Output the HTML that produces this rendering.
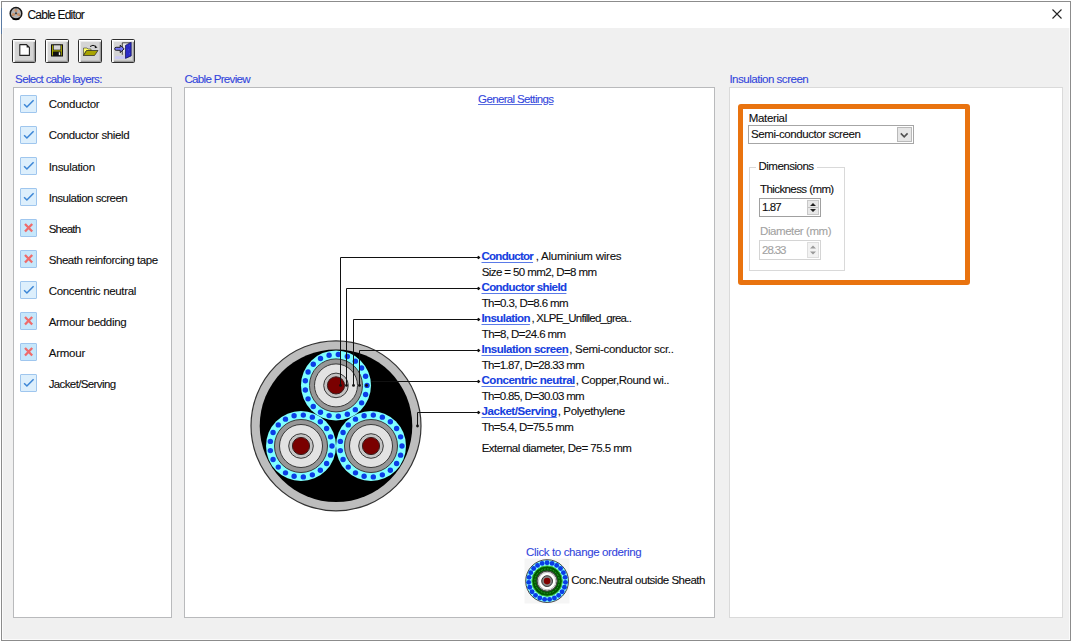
<!DOCTYPE html>
<html><head><meta charset="utf-8">
<style>
html,body{margin:0;padding:0;}
body{width:1072px;height:642px;position:relative;overflow:hidden;background:#fff;font-family:"Liberation Sans",sans-serif;}
.abs{position:absolute;}
.tx{position:absolute;white-space:pre;line-height:1;font-family:"Liberation Sans",sans-serif;-webkit-text-stroke:0.1px currentColor;}
.frame{position:absolute;left:1px;top:1px;width:1068px;height:638px;border:1px solid #8c8c8c;background:#f0f0f0;box-shadow:inset 1px 0 0 #fbfbfb, inset -1px -1px 0 #fbfbfb;}
.title{position:absolute;left:2px;top:2px;width:1068px;height:26px;background:#fff;}
.btn{position:absolute;top:39px;width:22px;height:22px;border:1px solid #2e2e2e;border-radius:1.5px;background:#d4d4d4;box-shadow:inset 1px 1px 0 #fff, inset 2px 2px 0 #ececec, inset -1px -1px 0 #9a9a9a, inset -2px -2px 0 #c2c2c2;}
.panel{position:absolute;top:87px;height:529px;background:#fff;border:1px solid #b9babc;}
.cb{position:absolute;left:20px;width:15px;height:16px;border:1px solid #9fc6ee;border-radius:1px;background:#ddeffc;}
.cb.x{background:#c6e7fb;}
</style></head><body>
<div class="frame"></div>
<div class="abs" style="left:1px;top:8px;width:1px;height:26px;background:#5b7ba3"></div>
<div class="title"></div>
<svg class="abs" style="left:6px;top:4px" width="20" height="20" viewBox="0 0 20 20">
 <circle cx="10" cy="9.4" r="5.8" fill="#b4b4b4" stroke="#161616" stroke-width="1.5"/>
 <path d="M10 9.4 V3.8 M10 9.4 L5.2 12.2 M10 9.4 L14.8 12.2" stroke="#555" stroke-width="0.9"/>
 <circle cx="10" cy="6.6" r="1.5" fill="#cf9468"/>
 <circle cx="7.4" cy="10.6" r="1.5" fill="#cf9468"/>
 <circle cx="12.6" cy="10.6" r="1.5" fill="#cf9468"/>
 <circle cx="10" cy="9.4" r="0.8" fill="#333"/>
 <path d="M6.5 14.6 Q10 16.2 13.5 14.6" stroke="#000" stroke-width="1.6" fill="none"/>
</svg>
<svg class="abs" style="left:1051px;top:8px" width="12" height="12"><path d="M1.5 1.5 L10.5 10.5 M10.5 1.5 L1.5 10.5" stroke="#222" stroke-width="1.1"/></svg>
<!-- toolbar -->
<div class="btn" style="left:12px"></div>
<div class="btn" style="left:45px"></div>
<div class="btn" style="left:78px"></div>
<div class="btn" style="left:111px"></div>
<svg class="abs" style="left:0;top:0" width="150" height="70">
 <path d="M19.8 44.6 H26.6 L29.4 47.4 V55.4 H19.8 Z" fill="#fff" stroke="#222" stroke-width="1.1" stroke-linejoin="round"/>
 <path d="M26.6 44.6 V47.4 H29.4 Z" fill="#222"/>
 <rect x="51" y="44.3" width="12" height="12.2" fill="#111"/>
 <rect x="52" y="45.3" width="10" height="10.2" fill="#a8a800"/>
 <rect x="53.3" y="45" width="7.5" height="5" fill="#d8d8d8" stroke="#111" stroke-width="0.6"/>
 <rect x="53" y="51.5" width="8.2" height="4.6" fill="#111"/>
 <rect x="58.8" y="52.3" width="1.4" height="2.8" fill="#eee"/>
 <path d="M83.5 48 H87 L88 49 H91 V51 H86 L83.5 55.5 Z" fill="#ffff66" stroke="#333" stroke-width="0.6"/>
 <path d="M83.5 55.5 L86.5 50.5 H98 L94.5 55.5 Z" fill="#a8a400" stroke="#222" stroke-width="0.7"/>
 <path d="M90 46.5 Q93 44 96 46.5" fill="none" stroke="#111" stroke-width="1"/>
 <path d="M95 45.5 L97.5 47.5 L94.8 48.2 Z" fill="#111"/>
 <rect x="115" y="56.3" width="10.5" height="2.6" fill="#c8c8f6"/>
 <path d="M122.3 54.8 V42.8 H130" fill="#e6e6e6" stroke="#222" stroke-width="0.8"/>
 <path d="M125.5 45.4 L131.2 42.2 V55.9 L125.5 58.4 Z" fill="#2a2ac6" stroke="#0c0c50" stroke-width="0.7"/>
 <circle cx="129.4" cy="45.8" r="0.35" fill="#9090e0"/><circle cx="128.6" cy="49.8" r="0.35" fill="#9090e0"/><circle cx="129.4" cy="53.8" r="0.35" fill="#9090e0"/>
 <path d="M114.7 48.8 Q114.7 47.3 116.2 47.3 H120.2 V45.2 L124.2 48.8 L120.2 52.6 V50.3 H116.2 Q114.7 50.3 114.7 48.8 Z" fill="#7a7af8" stroke="#111" stroke-width="0.9"/>
</svg>
<!-- panels -->
<div class="panel" style="left:13px;width:157px"></div>
<div class="panel" style="left:184px;width:529px"></div>
<div class="panel" style="left:729px;width:332px;border-color:#dadada"></div>
<div class='cb' style='top:95px'><svg width='17' height='18' style='position:absolute;left:-1px;top:-1px'><path d='M4.1 9.3 L6.9 12 L13.6 5.3' fill='none' stroke='#3d86d6' stroke-width='1.55'/></svg></div>
<div class='cb' style='top:126px'><svg width='17' height='18' style='position:absolute;left:-1px;top:-1px'><path d='M4.1 9.3 L6.9 12 L13.6 5.3' fill='none' stroke='#3d86d6' stroke-width='1.55'/></svg></div>
<div class='cb' style='top:157px'><svg width='17' height='18' style='position:absolute;left:-1px;top:-1px'><path d='M4.1 9.3 L6.9 12 L13.6 5.3' fill='none' stroke='#3d86d6' stroke-width='1.55'/></svg></div>
<div class='cb' style='top:188px'><svg width='17' height='18' style='position:absolute;left:-1px;top:-1px'><path d='M4.1 9.3 L6.9 12 L13.6 5.3' fill='none' stroke='#3d86d6' stroke-width='1.55'/></svg></div>
<div class='cb x' style='top:219px'><svg width='17' height='18' style='position:absolute;left:-1px;top:-1px'><path d='M5 5 L12.2 12.5 M12.2 5 L5 12.5' fill='none' stroke='#ef6b6b' stroke-width='2.3'/></svg></div>
<div class='cb x' style='top:250px'><svg width='17' height='18' style='position:absolute;left:-1px;top:-1px'><path d='M5 5 L12.2 12.5 M12.2 5 L5 12.5' fill='none' stroke='#ef6b6b' stroke-width='2.3'/></svg></div>
<div class='cb' style='top:281px'><svg width='17' height='18' style='position:absolute;left:-1px;top:-1px'><path d='M4.1 9.3 L6.9 12 L13.6 5.3' fill='none' stroke='#3d86d6' stroke-width='1.55'/></svg></div>
<div class='cb x' style='top:312px'><svg width='17' height='18' style='position:absolute;left:-1px;top:-1px'><path d='M5 5 L12.2 12.5 M12.2 5 L5 12.5' fill='none' stroke='#ef6b6b' stroke-width='2.3'/></svg></div>
<div class='cb x' style='top:343px'><svg width='17' height='18' style='position:absolute;left:-1px;top:-1px'><path d='M5 5 L12.2 12.5 M12.2 5 L5 12.5' fill='none' stroke='#ef6b6b' stroke-width='2.3'/></svg></div>
<div class='cb' style='top:374px'><svg width='17' height='18' style='position:absolute;left:-1px;top:-1px'><path d='M4.1 9.3 L6.9 12 L13.6 5.3' fill='none' stroke='#3d86d6' stroke-width='1.55'/></svg></div>
<!-- preview drawings -->
<svg class="abs" style="left:0;top:0" width="1072" height="642">
<circle cx='336' cy='425.8' r='85' fill='#bdbdbd' stroke='#333' stroke-width='1.2'/><circle cx='336' cy='425.8' r='76.3' fill='#000'/><circle cx='336' cy='385.40000000000003' r='35' fill='#80ffff'/><circle cx='367.00' cy='385.40' r='2.7' fill='#0a3de6'/><circle cx='365.62' cy='394.54' r='2.7' fill='#0a3de6'/><circle cx='361.61' cy='402.86' r='2.7' fill='#0a3de6'/><circle cx='355.33' cy='409.64' r='2.7' fill='#0a3de6'/><circle cx='347.33' cy='414.26' r='2.7' fill='#0a3de6'/><circle cx='338.32' cy='416.31' r='2.7' fill='#0a3de6'/><circle cx='329.10' cy='415.62' r='2.7' fill='#0a3de6'/><circle cx='320.50' cy='412.25' r='2.7' fill='#0a3de6'/><circle cx='313.28' cy='406.49' r='2.7' fill='#0a3de6'/><circle cx='308.07' cy='398.85' r='2.7' fill='#0a3de6'/><circle cx='305.35' cy='390.02' r='2.7' fill='#0a3de6'/><circle cx='305.35' cy='380.78' r='2.7' fill='#0a3de6'/><circle cx='308.07' cy='371.95' r='2.7' fill='#0a3de6'/><circle cx='313.28' cy='364.31' r='2.7' fill='#0a3de6'/><circle cx='320.50' cy='358.55' r='2.7' fill='#0a3de6'/><circle cx='329.10' cy='355.18' r='2.7' fill='#0a3de6'/><circle cx='338.32' cy='354.49' r='2.7' fill='#0a3de6'/><circle cx='347.33' cy='356.54' r='2.7' fill='#0a3de6'/><circle cx='355.33' cy='361.16' r='2.7' fill='#0a3de6'/><circle cx='361.61' cy='367.94' r='2.7' fill='#0a3de6'/><circle cx='365.62' cy='376.26' r='2.7' fill='#0a3de6'/><circle cx='336' cy='385.40000000000003' r='26.5' fill='#979797' stroke='#3a3a3a' stroke-width='1'/><circle cx='336' cy='385.40000000000003' r='21.5' fill='#e2e2e2' stroke='#3a3a3a' stroke-width='1'/><circle cx='336' cy='385.40000000000003' r='12.3' fill='#c4c4c4' stroke='#3a3a3a' stroke-width='1'/><circle cx='336' cy='385.40000000000003' r='8.6' fill='#7a0000' stroke='#3a2020' stroke-width='1'/><circle cx='301' cy='446.0' r='35' fill='#80ffff'/><circle cx='332.00' cy='446.00' r='2.7' fill='#0a3de6'/><circle cx='330.62' cy='455.14' r='2.7' fill='#0a3de6'/><circle cx='326.61' cy='463.46' r='2.7' fill='#0a3de6'/><circle cx='320.33' cy='470.24' r='2.7' fill='#0a3de6'/><circle cx='312.33' cy='474.86' r='2.7' fill='#0a3de6'/><circle cx='303.32' cy='476.91' r='2.7' fill='#0a3de6'/><circle cx='294.10' cy='476.22' r='2.7' fill='#0a3de6'/><circle cx='285.50' cy='472.85' r='2.7' fill='#0a3de6'/><circle cx='278.28' cy='467.09' r='2.7' fill='#0a3de6'/><circle cx='273.07' cy='459.45' r='2.7' fill='#0a3de6'/><circle cx='270.35' cy='450.62' r='2.7' fill='#0a3de6'/><circle cx='270.35' cy='441.38' r='2.7' fill='#0a3de6'/><circle cx='273.07' cy='432.55' r='2.7' fill='#0a3de6'/><circle cx='278.28' cy='424.91' r='2.7' fill='#0a3de6'/><circle cx='285.50' cy='419.15' r='2.7' fill='#0a3de6'/><circle cx='294.10' cy='415.78' r='2.7' fill='#0a3de6'/><circle cx='303.32' cy='415.09' r='2.7' fill='#0a3de6'/><circle cx='312.33' cy='417.14' r='2.7' fill='#0a3de6'/><circle cx='320.33' cy='421.76' r='2.7' fill='#0a3de6'/><circle cx='326.61' cy='428.54' r='2.7' fill='#0a3de6'/><circle cx='330.62' cy='436.86' r='2.7' fill='#0a3de6'/><circle cx='301' cy='446.0' r='26.5' fill='#979797' stroke='#3a3a3a' stroke-width='1'/><circle cx='301' cy='446.0' r='21.5' fill='#e2e2e2' stroke='#3a3a3a' stroke-width='1'/><circle cx='301' cy='446.0' r='12.3' fill='#c4c4c4' stroke='#3a3a3a' stroke-width='1'/><circle cx='301' cy='446.0' r='8.6' fill='#7a0000' stroke='#3a2020' stroke-width='1'/><circle cx='371' cy='446.0' r='35' fill='#80ffff'/><circle cx='402.00' cy='446.00' r='2.7' fill='#0a3de6'/><circle cx='400.62' cy='455.14' r='2.7' fill='#0a3de6'/><circle cx='396.61' cy='463.46' r='2.7' fill='#0a3de6'/><circle cx='390.33' cy='470.24' r='2.7' fill='#0a3de6'/><circle cx='382.33' cy='474.86' r='2.7' fill='#0a3de6'/><circle cx='373.32' cy='476.91' r='2.7' fill='#0a3de6'/><circle cx='364.10' cy='476.22' r='2.7' fill='#0a3de6'/><circle cx='355.50' cy='472.85' r='2.7' fill='#0a3de6'/><circle cx='348.28' cy='467.09' r='2.7' fill='#0a3de6'/><circle cx='343.07' cy='459.45' r='2.7' fill='#0a3de6'/><circle cx='340.35' cy='450.62' r='2.7' fill='#0a3de6'/><circle cx='340.35' cy='441.38' r='2.7' fill='#0a3de6'/><circle cx='343.07' cy='432.55' r='2.7' fill='#0a3de6'/><circle cx='348.28' cy='424.91' r='2.7' fill='#0a3de6'/><circle cx='355.50' cy='419.15' r='2.7' fill='#0a3de6'/><circle cx='364.10' cy='415.78' r='2.7' fill='#0a3de6'/><circle cx='373.32' cy='415.09' r='2.7' fill='#0a3de6'/><circle cx='382.33' cy='417.14' r='2.7' fill='#0a3de6'/><circle cx='390.33' cy='421.76' r='2.7' fill='#0a3de6'/><circle cx='396.61' cy='428.54' r='2.7' fill='#0a3de6'/><circle cx='400.62' cy='436.86' r='2.7' fill='#0a3de6'/><circle cx='371' cy='446.0' r='26.5' fill='#979797' stroke='#3a3a3a' stroke-width='1'/><circle cx='371' cy='446.0' r='21.5' fill='#e2e2e2' stroke='#3a3a3a' stroke-width='1'/><circle cx='371' cy='446.0' r='12.3' fill='#c4c4c4' stroke='#3a3a3a' stroke-width='1'/><circle cx='371' cy='446.0' r='8.6' fill='#7a0000' stroke='#3a2020' stroke-width='1'/><path d='M340.5 385.4 V257.5 H478' fill='none' stroke='#111' stroke-width='1'/><path d='M476.5 257.5 L478.5 255.7 L480.5 257.5 L478.5 259.3 Z' fill='#111'/><circle cx='340.5' cy='385.4' r='1.4' fill='#111'/><path d='M346.5 385.4 V288.5 H478' fill='none' stroke='#111' stroke-width='1'/><path d='M476.5 288.5 L478.5 286.7 L480.5 288.5 L478.5 290.3 Z' fill='#111'/><circle cx='346.5' cy='385.4' r='1.4' fill='#111'/><path d='M353.5 385.4 V319.5 H478' fill='none' stroke='#111' stroke-width='1'/><path d='M476.5 319.5 L478.5 317.7 L480.5 319.5 L478.5 321.3 Z' fill='#111'/><circle cx='353.5' cy='385.4' r='1.4' fill='#111'/><path d='M359.5 385.4 V350.5 H478' fill='none' stroke='#111' stroke-width='1'/><path d='M476.5 350.5 L478.5 348.7 L480.5 350.5 L478.5 352.3 Z' fill='#111'/><circle cx='359.5' cy='385.4' r='1.4' fill='#111'/><path d='M371 381.5 H478' fill='none' stroke='#111' stroke-width='1'/><path d='M476.5 381.5 L478.5 379.7 L480.5 381.5 L478.5 383.3 Z' fill='#111'/><circle cx='366.5' cy='385.4' r='1.4' fill='#111'/><path d='M417.5 426 V412.5 H478' fill='none' stroke='#111' stroke-width='1'/><path d='M476.5 412.5 L478.5 410.7 L480.5 412.5 L478.5 414.3 Z' fill='#111'/><circle cx='417.5' cy='426' r='1.4' fill='#111'/>
<rect x='524.5' y='558.5' width='45' height='45' fill='#f5f5f5'/><circle cx='547.1' cy='581.1' r='21.4' fill='#88ffff' stroke='#4a4a4a' stroke-width='1'/><circle cx='547.10' cy='562.70' r='2.45' fill='#0a3de6'/><circle cx='552.06' cy='563.38' r='2.45' fill='#0a3de6'/><circle cx='556.66' cy='565.38' r='2.45' fill='#0a3de6'/><circle cx='560.55' cy='568.54' r='2.45' fill='#0a3de6'/><circle cx='563.44' cy='572.63' r='2.45' fill='#0a3de6'/><circle cx='565.12' cy='577.36' r='2.45' fill='#0a3de6'/><circle cx='565.46' cy='582.36' r='2.45' fill='#0a3de6'/><circle cx='564.44' cy='587.26' r='2.45' fill='#0a3de6'/><circle cx='562.13' cy='591.71' r='2.45' fill='#0a3de6'/><circle cx='558.71' cy='595.37' r='2.45' fill='#0a3de6'/><circle cx='554.43' cy='597.98' r='2.45' fill='#0a3de6'/><circle cx='549.61' cy='599.33' r='2.45' fill='#0a3de6'/><circle cx='544.59' cy='599.33' r='2.45' fill='#0a3de6'/><circle cx='539.77' cy='597.98' r='2.45' fill='#0a3de6'/><circle cx='535.49' cy='595.37' r='2.45' fill='#0a3de6'/><circle cx='532.07' cy='591.71' r='2.45' fill='#0a3de6'/><circle cx='529.76' cy='587.26' r='2.45' fill='#0a3de6'/><circle cx='528.74' cy='582.36' r='2.45' fill='#0a3de6'/><circle cx='529.08' cy='577.36' r='2.45' fill='#0a3de6'/><circle cx='530.76' cy='572.63' r='2.45' fill='#0a3de6'/><circle cx='533.65' cy='568.54' r='2.45' fill='#0a3de6'/><circle cx='537.54' cy='565.38' r='2.45' fill='#0a3de6'/><circle cx='542.14' cy='563.38' r='2.45' fill='#0a3de6'/><circle cx='547.1' cy='581.1' r='15.2' fill='#005a00' stroke='#3cc03c' stroke-width='1'/><circle cx='547.1' cy='581.1' r='12.2' fill='none' stroke='#3aa83a' stroke-width='0.8' stroke-dasharray='1.6 1.4'/><circle cx='547.1' cy='581.1' r='10' fill='#ffffff' stroke='#4a4a4a' stroke-width='1.2'/><circle cx='547.1' cy='581.1' r='8.7' fill='none' stroke='#bdbdbd' stroke-width='1'/><circle cx='547.1' cy='581.1' r='5.4' fill='#888' stroke='#333' stroke-width='1'/><circle cx='547.1' cy='581.1' r='3.3' fill='#800000'/>
</svg>
<!-- right panel -->
<div class="abs" style="left:738px;top:104px;width:222px;height:171px;border:5px solid #e9730f;border-radius:3px"></div>
<div class="abs" style="left:748px;top:125px;width:164px;height:17px;border:1px solid #a6a6a6;background:#fff"></div>
<div class="abs" style="left:897px;top:127px;width:13px;height:13px;border:1px solid #b9b9b9;background:#e6e6e6"></div>
<svg class="abs" style="left:897px;top:127px" width="15" height="15"><path d="M3.8 6.4 L7.2 9.8 L10.6 6.4" fill="none" stroke="#505050" stroke-width="1.6"/></svg>
<div class="abs" style="left:749px;top:167px;width:94px;height:102px;border:1px solid #d9d9d9"></div>
<div class="abs" style="left:759px;top:198px;width:60px;height:17px;border:1px solid #a0a0a0;background:#fff"></div>
<div class="abs" style="left:807px;top:200px;width:10px;height:13px;border:1px solid #c8c8c8;background:#e8e8e8"></div>
<svg class="abs" style="left:807px;top:200px" width="12" height="15"><path d="M3 6 L6 3 L9 6 Z M3 9 L6 12 L9 9 Z" fill="#222"/><path d="M1 7.5 H11" stroke="#c0c0c0" stroke-width="1"/></svg>
<div class="abs" style="left:759px;top:240px;width:60px;height:18px;border:1px solid #d4d4d4;background:#fff"></div>
<div class="abs" style="left:807px;top:242px;width:10px;height:14px;border:1px solid #dedede;background:#f2f2f2"></div>
<svg class="abs" style="left:807px;top:242px" width="12" height="16"><path d="M3 6.5 L6 3.5 L9 6.5 Z M3 9.5 L6 12.5 L9 9.5 Z" fill="#9a9a9a"/></svg>
<div class='tx' style='left:27.5px;top:9px;font-size:12.0px;font-weight:400;color:#0e0e0e;letter-spacing:-0.795px;'>Cable Editor</div>
<div class='tx' style='left:15.1px;top:73px;font-size:11.6px;font-weight:400;color:#3346dc;letter-spacing:-0.696px;'>Select cable layers:</div>
<div class='tx' style='left:184.4px;top:73px;font-size:11.6px;font-weight:400;color:#3346dc;letter-spacing:-0.704px;'>Cable Preview</div>
<div class='tx' style='left:729.4px;top:73px;font-size:11.6px;font-weight:400;color:#3346dc;letter-spacing:-0.516px;'>Insulation screen</div>
<div class='tx' style='left:48.7px;top:99px;font-size:11.5px;font-weight:400;color:#0e0e0e;letter-spacing:-0.258px;'>Conductor</div>
<div class='tx' style='left:48.7px;top:130px;font-size:11.5px;font-weight:400;color:#0e0e0e;letter-spacing:-0.354px;'>Conductor shield</div>
<div class='tx' style='left:48.7px;top:162px;font-size:11.5px;font-weight:400;color:#0e0e0e;letter-spacing:-0.315px;'>Insulation</div>
<div class='tx' style='left:48.7px;top:193px;font-size:11.5px;font-weight:400;color:#0e0e0e;letter-spacing:-0.497px;'>Insulation screen</div>
<div class='tx' style='left:48.7px;top:224px;font-size:11.5px;font-weight:400;color:#0e0e0e;letter-spacing:-0.811px;'>Sheath</div>
<div class='tx' style='left:48.7px;top:255px;font-size:11.5px;font-weight:400;color:#0e0e0e;letter-spacing:-0.433px;'>Sheath reinforcing tape</div>
<div class='tx' style='left:48.7px;top:286px;font-size:11.5px;font-weight:400;color:#0e0e0e;letter-spacing:-0.337px;'>Concentric neutral</div>
<div class='tx' style='left:48.7px;top:317px;font-size:11.5px;font-weight:400;color:#0e0e0e;letter-spacing:-0.294px;'>Armour bedding</div>
<div class='tx' style='left:48.7px;top:348px;font-size:11.5px;font-weight:400;color:#0e0e0e;letter-spacing:-0.221px;'>Armour</div>
<div class='tx' style='left:48.7px;top:379px;font-size:11.5px;font-weight:400;color:#0e0e0e;letter-spacing:-0.618px;'>Jacket/Serving</div>
<div class='tx' style='left:478.1px;top:94px;font-size:11.5px;font-weight:400;color:#3346dc;letter-spacing:-0.645px;text-decoration:underline;text-decoration-color:#5a70e0;text-underline-offset:1px;'>General Settings</div>
<div class='tx' style='left:481.5px;top:251px;font-size:11.5px;font-weight:700;color:#1540e0;letter-spacing:-0.730px;text-decoration:underline;text-decoration-color:#5a7ae8;text-underline-offset:1.5px;'>Conductor</div>
<div class='tx' style='left:535.8px;top:251px;font-size:11.5px;font-weight:400;color:#0e0e0e;letter-spacing:-0.229px;'>, Aluminium wires</div>
<div class='tx' style='left:481.7px;top:267px;font-size:11.5px;font-weight:400;color:#0e0e0e;letter-spacing:-0.594px;'>Size = 50 mm2, D=8 mm</div>
<div class='tx' style='left:481.5px;top:282px;font-size:11.5px;font-weight:700;color:#1540e0;letter-spacing:-0.604px;text-decoration:underline;text-decoration-color:#5a7ae8;text-underline-offset:1.5px;'>Conductor shield</div>
<div class='tx' style='left:481.7px;top:298px;font-size:11.5px;font-weight:400;color:#0e0e0e;letter-spacing:-0.592px;'>Th=0.3, D=8.6 mm</div>
<div class='tx' style='left:481.5px;top:313px;font-size:11.5px;font-weight:700;color:#1540e0;letter-spacing:-0.590px;text-decoration:underline;text-decoration-color:#5a7ae8;text-underline-offset:1.5px;'>Insulation</div>
<div class='tx' style='left:531.4px;top:313px;font-size:11.5px;font-weight:400;color:#0e0e0e;letter-spacing:-0.755px;'>, XLPE_Unfilled_grea..</div>
<div class='tx' style='left:481.7px;top:329px;font-size:11.5px;font-weight:400;color:#0e0e0e;letter-spacing:-0.585px;'>Th=8, D=24.6 mm</div>
<div class='tx' style='left:481.5px;top:344px;font-size:11.5px;font-weight:700;color:#1540e0;letter-spacing:-0.462px;text-decoration:underline;text-decoration-color:#5a7ae8;text-underline-offset:1.5px;'>Insulation screen</div>
<div class='tx' style='left:569.3px;top:344px;font-size:11.5px;font-weight:400;color:#0e0e0e;letter-spacing:-0.315px;'>, Semi-conductor scr..</div>
<div class='tx' style='left:481.7px;top:360px;font-size:11.5px;font-weight:400;color:#0e0e0e;letter-spacing:-0.670px;'>Th=1.87, D=28.33 mm</div>
<div class='tx' style='left:481.5px;top:375px;font-size:11.5px;font-weight:700;color:#1540e0;letter-spacing:-0.459px;text-decoration:underline;text-decoration-color:#5a7ae8;text-underline-offset:1.5px;'>Concentric neutral</div>
<div class='tx' style='left:575.7px;top:375px;font-size:11.5px;font-weight:400;color:#0e0e0e;letter-spacing:-0.406px;'>, Copper,Round wi..</div>
<div class='tx' style='left:481.7px;top:391px;font-size:11.5px;font-weight:400;color:#0e0e0e;letter-spacing:-0.670px;'>Th=0.85, D=30.03 mm</div>
<div class='tx' style='left:481.5px;top:406px;font-size:11.5px;font-weight:700;color:#1540e0;letter-spacing:-0.422px;text-decoration:underline;text-decoration-color:#5a7ae8;text-underline-offset:1.5px;'>Jacket/Serving</div>
<div class='tx' style='left:557.7px;top:406px;font-size:11.5px;font-weight:400;color:#0e0e0e;letter-spacing:-0.373px;'>, Polyethylene</div>
<div class='tx' style='left:481.7px;top:422px;font-size:11.5px;font-weight:400;color:#0e0e0e;letter-spacing:-0.636px;'>Th=5.4, D=75.5 mm</div>
<div class='tx' style='left:481.7px;top:443px;font-size:11.5px;font-weight:400;color:#0e0e0e;letter-spacing:-0.518px;'>External diameter, De= 75.5 mm</div>
<div class='tx' style='left:526.1px;top:547px;font-size:11.5px;font-weight:400;color:#3346dc;letter-spacing:-0.366px;'>Click to change ordering</div>
<div class='tx' style='left:571.2px;top:575px;font-size:11.5px;font-weight:400;color:#0e0e0e;letter-spacing:-0.494px;'>Conc.Neutral outside Sheath</div>
<div class='tx' style='left:748.8px;top:113px;font-size:11.5px;font-weight:400;color:#0e0e0e;letter-spacing:-0.358px;'>Material</div>
<div class='tx' style='left:751.0px;top:129px;font-size:11.5px;font-weight:400;color:#0e0e0e;letter-spacing:-0.423px;'>Semi-conductor screen</div>
<div class='tx' style='left:755.5px;top:161px;font-size:11.5px;font-weight:400;color:#0e0e0e;letter-spacing:-0.498px;background:#fff;padding:0 3px;'>Dimensions</div>
<div class='tx' style='left:760.0px;top:184px;font-size:11.5px;font-weight:400;color:#0e0e0e;letter-spacing:-0.583px;'>Thickness (mm)</div>
<div class='tx' style='left:762.1px;top:202px;font-size:11.5px;font-weight:400;color:#0e0e0e;letter-spacing:-0.964px;'>1.87</div>
<div class='tx' style='left:760.0px;top:226px;font-size:11.5px;font-weight:400;color:#a2a2a2;letter-spacing:-0.423px;'>Diameter (mm)</div>
<div class='tx' style='left:762.1px;top:245px;font-size:11.5px;font-weight:400;color:#a2a2a2;letter-spacing:-1.095px;'>28.33</div>
</body></html>
